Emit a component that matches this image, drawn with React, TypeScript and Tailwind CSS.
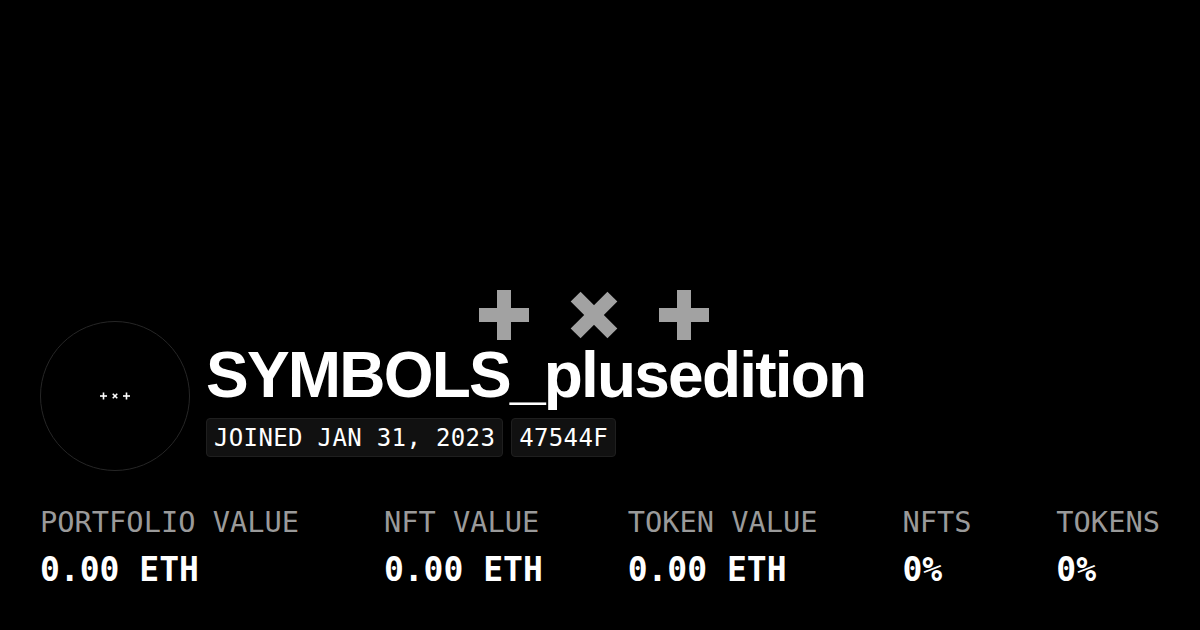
import React from "react";

const Plus = ({ s = 50, t = 14, c = "#a2a2a2" }: { s?: number; t?: number; c?: string }) => (
  <svg width={s} height={s} viewBox={`0 0 ${s} ${s}`}>
    <rect x={(s - t) / 2} y={0} width={t} height={s} fill={c} />
    <rect x={0} y={(s - t) / 2} width={s} height={t} fill={c} />
  </svg>
);

const Cross = () => (
  <svg width={50} height={50} viewBox="0 0 50 50">
    <g transform="rotate(45 25 25)">
      <rect x={18} y={-1} width={14} height={52} fill="#a2a2a2" />
      <rect x={-1} y={18} width={52} height={14} fill="#a2a2a2" />
    </g>
  </svg>
);

const stats = [
  ["PORTFOLIO VALUE", "0.00 ETH"],
  ["NFT VALUE", "0.00 ETH"],
  ["TOKEN VALUE", "0.00 ETH"],
  ["NFTS", "0%"],
  ["TOKENS", "0%"],
];

export default function App() {
  const mono = { fontFamily: '"DejaVu Sans Mono", "Liberation Mono", monospace' };
  return (
    <div className="relative w-[1200px] h-[630px] bg-black overflow-hidden text-white">
      <div className="absolute left-0 top-0 w-[1200px] h-[345px] flex items-end justify-center gap-[40px] pb-[5px] pr-[13px]">
        <div className="blur-[0.7px]"><Plus /></div>
        <div className="blur-[0.7px]"><Cross /></div>
        <div className="blur-[0.7px]"><Plus /></div>
      </div>
      <div className="relative flex flex-col h-full px-10 pt-[321px]">
        <div className="flex items-start gap-4">
          <div className="w-[150px] h-[150px] rounded-full border border-[#262626] bg-black flex items-center justify-center shrink-0">
            <svg width="30" height="8" viewBox="0 0 30 8">
              <rect x="0" y="3.2" width="7" height="1.6" fill="#fff" />
              <rect x="2.7" y="0.5" width="1.6" height="7" fill="#fff" />
              <g transform="rotate(45 15 4)">
                <rect x="11.8" y="3.2" width="6.4" height="1.6" fill="#fff" />
                <rect x="14.2" y="0.8" width="1.6" height="6.4" fill="#fff" />
              </g>
              <rect x="23" y="3.2" width="7" height="1.6" fill="#fff" />
              <rect x="25.7" y="0.5" width="1.6" height="7" fill="#fff" />
            </svg>
          </div>
          <div className="flex flex-col pt-[22px]">
            <div
              className="text-[64px] leading-[64px] font-bold tracking-[-0.028em] text-white"
              style={{ fontFamily: '"Liberation Sans", Arial, sans-serif' }}
            >
              SYMBOLS_plusedition
            </div>
            <div className="flex gap-2 mt-[11px]" style={mono}>
              <div className="h-[39px] flex items-center px-[7px] rounded-[4px] bg-[#111111] border border-[#1f1f1f] text-[24px] tracking-[0.35px] text-white">
                JOINED JAN 31, 2023
              </div>
              <div className="h-[39px] flex items-center px-[7px] rounded-[4px] bg-[#111111] border border-[#1f1f1f] text-[24px] tracking-[0.35px] text-white">
                47544F
              </div>
            </div>
          </div>
        </div>
        <div className="flex justify-between mt-[35px]" style={mono}>
          {stats.map(([l, v]) => (
            <div key={l} className="flex flex-col">
              <div className="text-[28.7px] leading-[32px] text-[#9a9a9a]">{l}</div>
              <div className="text-[33px] leading-[36px] font-bold text-white mt-[14px]">{v}</div>
            </div>
          ))}
        </div>
      </div>
    </div>
  );
}
